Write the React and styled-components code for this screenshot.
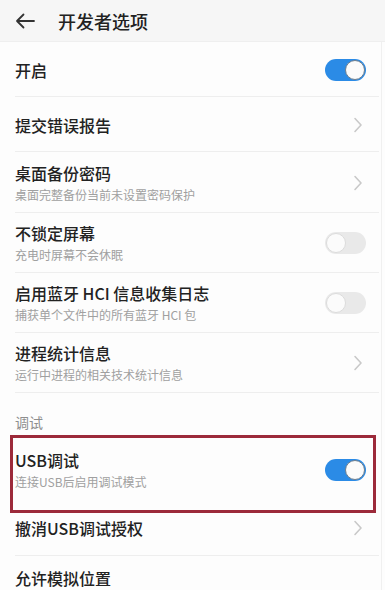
import React from "react";
import styled, { createGlobalStyle } from "styled-components";

const Global = createGlobalStyle`
  html, body { margin: 0; padding: 0; background: #fcfcfc; }
  body { font-family: "Noto Sans CJK SC", "Noto Sans", sans-serif; color: #222; }
  * { box-sizing: border-box; }
`;

const Page = styled.div`
  width: 385px;
  height: 590px;
  overflow: hidden;
  background: #fdfdfd;
  display: flex;
  flex-direction: column;
`;

const Header = styled.div`
  height: 42px;
  flex: none;
  display: flex;
  align-items: center;
  gap: 23px;
  padding-left: 15px;
  background: #f6f6f6;
  border-bottom: 1px solid #efefef;
`;

const Title = styled.div`
  font-size: 18px;
  font-weight: 500;
  color: #222;
  letter-spacing: 0;
`;

const List = styled.div`
  display: flex;
  flex-direction: column;
  width: 382px;
  border-right: 1px solid #f0f0f0;
`;

const Row = styled.div`
  position: relative;
  height: ${(p) => p.h}px;
  flex: none;
  display: flex;
  align-items: center;
  justify-content: space-between;
  padding: 0 12px 0 15px;
  &::after {
    content: "";
    display: ${(p) => (p.noline ? "none" : "block")};
    position: absolute;
    left: 15px;
    right: 2px;
    bottom: 0;
    height: 1px;
    background: #eeeeee;
  }
`;

const Texts = styled.div`
  display: flex;
  flex-direction: column;
  gap: 2px;
`;

const RowTitle = styled.div`
  font-size: 16px;
  line-height: 22px;
  font-weight: 500;
  color: #222;
`;

const Sub = styled.div`
  font-size: 12px;
  line-height: 18px;
  color: #a0a0a0;
`;

const Section = styled.div`
  height: 47px;
  flex: none;
  display: flex;
  align-items: flex-end;
  padding: 0 0 8px 15px;
  font-size: 14px;
  color: #8e8e8e;
`;

const Track = styled.div`
  width: 41px;
  height: 22px;
  border-radius: 11px;
  margin-right: 3px;
  background: ${(p) => (p.on ? "#2b8be6" : "#e9e9e9")};
  display: flex;
  align-items: center;
  justify-content: ${(p) => (p.on ? "flex-end" : "flex-start")};
  padding: 1px;
`;

const Knob = styled.div`
  width: 20px;
  height: 20px;
  border-radius: 50%;
  background: #fbfbfb;
  border: 1.5px solid ${(p) => (p.on ? "#6f7e8c" : "#dcdcdc")};
`;

const Highlight = styled.div`
  position: absolute;
  left: 10px;
  right: 5px;
  top: -5px;
  bottom: -13px;
  border: 3px solid #9c2a3a;
  pointer-events: none;
`;

const Toggle = ({ on }) => (
  <Track on={on ? 1 : 0}>
    <Knob on={on ? 1 : 0} />
  </Track>
);

const Chevron = () => (
  <svg width="10" height="16" viewBox="0 0 10 16" style={{ marginRight: 6 }}>
    <path d="M2 1.5 L8 8 L2 14.5" fill="none" stroke="#c9c9c9" strokeWidth="1.6" strokeLinecap="round" strokeLinejoin="round" />
  </svg>
);

const BackArrow = () => (
  <svg width="20" height="16" viewBox="0 0 20 16">
    <path d="M19 8 H2 M8.5 1.5 L2 8 L8.5 14.5" fill="none" stroke="#333" strokeWidth="1.8" strokeLinecap="round" strokeLinejoin="round" />
  </svg>
);

export default function App() {
  return (
    <Page>
      <Global />
      <Header>
        <BackArrow />
        <Title>开发者选项</Title>
      </Header>
      <List>
        <Row h={55}>
          <RowTitle>开启</RowTitle>
          <Toggle on />
        </Row>
        <Row h={55}>
          <RowTitle>提交错误报告</RowTitle>
          <Chevron />
        </Row>
        <Row h={61}>
          <Texts>
            <RowTitle>桌面备份密码</RowTitle>
            <Sub>桌面完整备份当前未设置密码保护</Sub>
          </Texts>
          <Chevron />
        </Row>
        <Row h={60}>
          <Texts>
            <RowTitle>不锁定屏幕</RowTitle>
            <Sub>充电时屏幕不会休眠</Sub>
          </Texts>
          <Toggle />
        </Row>
        <Row h={60}>
          <Texts>
            <RowTitle>启用蓝牙 HCI 信息收集日志</RowTitle>
            <Sub>捕获单个文件中的所有蓝牙 HCI 包</Sub>
          </Texts>
          <Toggle />
        </Row>
        <Row h={60}>
          <Texts>
            <RowTitle>进程统计信息</RowTitle>
            <Sub>运行中进程的相关技术统计信息</Sub>
          </Texts>
          <Chevron />
        </Row>
        <Section>调试</Section>
        <Row h={60} noline>
          <Texts>
            <RowTitle>USB调试</RowTitle>
            <Sub>连接USB后启用调试模式</Sub>
          </Texts>
          <Toggle on />
          <Highlight />
        </Row>
        <Row h={56}>
          <RowTitle>撤消USB调试授权</RowTitle>
          <Chevron />
        </Row>
        <Row h={44} noline>
          <RowTitle>允许模拟位置</RowTitle>
        </Row>
      </List>
    </Page>
  );
}
